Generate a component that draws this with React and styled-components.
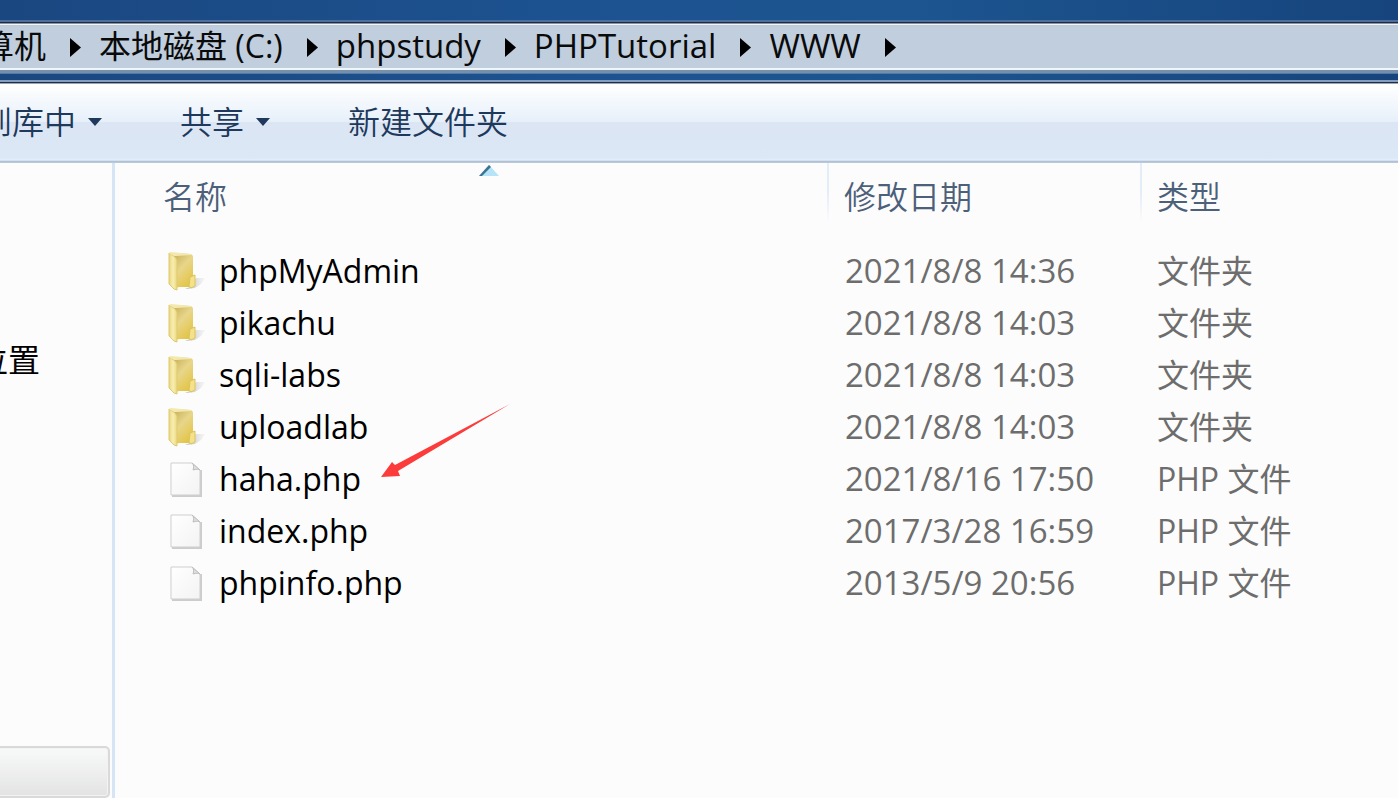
import React from 'react';
import styled, { createGlobalStyle } from 'styled-components';

const GlobalStyle = createGlobalStyle`
  * {
    box-sizing: border-box;
  }

  body {
    margin: 0;
    background: #fcfcfc;
    font-family: 'Open Sans', 'Noto Sans CJK SC', sans-serif;
    font-size: 32px;
    line-height: 44px;
  }
`;

const Window = styled.div`
  display: flex;
  flex-direction: column;
  height: 100vh;
  overflow: hidden;
`;

const Glass = styled.header`
  padding: 20px 0 6px;
  background: linear-gradient(90deg, #1b4780 0%, #1c5290 40%, #1c5590 65%, #17447c 100%);
`;

const AddressBar = styled.nav`
  height: 54px;
  border-top: 2px solid #4c6f9e;
  border-bottom: 1px solid #4f7ba6;
  background: linear-gradient(
    180deg,
    #1d2c46 0 1px,
    #8b929e 1px 2px,
    #f2f6fa 2px 3px,
    #bccadb 3px 4px,
    #c0cede 5px 46px,
    #f0f5fa 46px 48px,
    #7690ab 48px 51px
  );
`;

const Crumbs = styled.ol`
  display: flex;
  align-items: center;
  height: 48px;
  margin: 0 0 0 -18px;
  padding: 0;
  list-style: none;
`;

const Crumb = styled.li`
  display: flex;
  align-items: center;
  color: #0a0a0a;
  font-size: ${(props) => (props.$latin ? '33px' : '32px')};
  white-space: nowrap;
`;

const CrumbLink = styled.a`
  color: inherit;
  text-decoration: none;
`;

const CrumbArrow = styled.svg`
  width: 11px;
  height: 19px;
  margin: 2px 18px 0 24px;
`;

const Toolbar = styled.div`
  display: flex;
  align-items: center;
  gap: 78px;
  height: 83px;
  overflow: hidden;
  background: linear-gradient(
    180deg,
    #869dbe 0 2px,
    #1c2e4c 2px 3px,
    #98a5b6 3px 4px,
    #ffffff 4px,
    #e6f0fa 42px,
    #dbe5f4 42px,
    #dce8f6 78px,
    #e2effb 80px,
    #c3d2e3 81px,
    #9fb1c8 82px,
    #d5dfea 83px
  );
`;

const ToolButton = styled.button`
  display: flex;
  align-items: center;
  gap: 12px;
  padding: 0;
  border: 0;
  background: none;
  color: #1e395b;
  font: inherit;
  font-weight: 350;
  white-space: nowrap;

  &:first-child {
    margin-left: -20px;
  }
`;

const Caret = styled.svg`
  width: 14px;
  height: 8px;
`;

const Body = styled.main`
  display: flex;
  flex: 1;
  min-height: 0;
`;

const Sidebar = styled.aside`
  display: flex;
  flex: 0 0 115px;
  flex-direction: column;
  justify-content: space-between;
  padding-top: 175px;
  border-right: 3px solid #d6e5f5;
  overflow: hidden;
`;

const Place = styled.a`
  margin-left: -24px;
  color: #000;
  text-decoration: none;
  white-space: nowrap;
`;

const SelectedPlace = styled.div`
  height: 52px;
  margin: 0 2px 0 -8px;
  border: 2px solid #d9d9d9;
  border-radius: 5px;
  background: linear-gradient(180deg, #f8faf9, #e3e3e3);
  box-shadow: inset 0 0 0 1px #f3f3f3;
`;

const FileTable = styled.table`
  flex: 1;
  align-self: flex-start;
  width: 100%;
  border-collapse: collapse;
  table-layout: fixed;
`;

const HeadCell = styled.th`
  position: relative;
  width: ${(props) => props.$width || 'auto'};
  height: 82px;
  padding: 12px 0 0 ${(props) => props.$indent || '15px'};
  background: ${(props) =>
    props.$divided
      ? 'linear-gradient(180deg, #e3edf8 50%, #fcfcfc) right top / 2px 60px no-repeat'
      : 'none'};
  color: #4c607a;
  font-weight: 350;
  text-align: left;
  vertical-align: top;
`;

const SortMark = styled.svg`
  position: absolute;
  top: 2px;
  left: 364px;
  width: 20px;
  height: 11px;
`;

const Cell = styled.td`
  height: 52px;
  padding: 0 0 0 ${(props) => props.$indent || '15px'};
  color: #6d6d6d;
  font-size: ${(props) => (props.$latin ? '33px' : '32px')};
  white-space: nowrap;
`;

const NameCell = styled.td`
  height: 52px;
  padding: 0 0 0 50px;
  color: #000;
`;

const FileName = styled.div`
  position: relative;
  display: flex;
  align-items: center;
  gap: 12px;
`;

const Icon = styled.svg`
  flex: none;
  width: 42px;
  height: 42px;
`;

const Pointer = styled.svg`
  position: absolute;
  top: -54px;
  left: 215px;
  width: 132px;
  height: 76px;
`;

const crumbs = [
  { label: '算机' },
  { label: '本地磁盘 (C:)' },
  { label: 'phpstudy', latin: true },
  { label: 'PHPTutorial', latin: true },
  { label: 'WWW', latin: true },
];

const files = [
  { name: 'phpMyAdmin', date: '2021/8/8 14:36', folder: true },
  { name: 'pikachu', date: '2021/8/8 14:03', folder: true },
  { name: 'sqli-labs', date: '2021/8/8 14:03', folder: true },
  { name: 'uploadlab', date: '2021/8/8 14:03', folder: true },
  { name: 'haha.php', date: '2021/8/16 17:50', marked: true },
  { name: 'index.php', date: '2017/3/28 16:59' },
  { name: 'phpinfo.php', date: '2013/5/9 20:56' },
];

const FolderIcon = () => (
  <Icon viewBox="0 0 42 42" aria-hidden="true">
    <defs>
      <linearGradient id="folderBack" x1="0" y1="0" x2="0.6" y2="1">
        <stop offset="0" stopColor="#c4ac55" />
        <stop offset="0.5" stopColor="#e8d68a" />
        <stop offset="1" stopColor="#e3c548" />
      </linearGradient>
      <linearGradient id="folderFront" x1="0" y1="0" x2="1" y2="0">
        <stop offset="0" stopColor="#e8d67f" />
        <stop offset="0.5" stopColor="#f8eeb0" />
        <stop offset="1" stopColor="#ecd981" />
      </linearGradient>
      <linearGradient id="folderShade" x1="0" y1="0" x2="1" y2="0">
        <stop offset="0" stopColor="#8a8a8a" />
        <stop offset="1" stopColor="#dddddd" stopOpacity="0.3" />
      </linearGradient>
    </defs>
    <path d="M25 37 L31 28 L40 28 L36 34 L30 38 L20 39 Z" fill="url(#folderShade)" opacity="0.7" />
    <path d="M8 3 L26 4 L28 6 V35 L25 37 L14 37 L10 38 Z" fill="url(#folderBack)" />
    <path d="M25 27 L30 25 V36 L26 38 L24 36 Z" fill="#f3e28a" stroke="#dcc25a" strokeWidth="1" />
    <path d="M4 3 L10 7 L12 10 V40 L9 39 L4 34 Z" fill="url(#folderFront)" stroke="#dfca72" strokeWidth="1" />
    <path d="M4 3 L6 2 L26 4 L27 5 L11 6 L9 6 Z" fill="#f3e8ad" />
  </Icon>
);

const FileIcon = () => (
  <Icon viewBox="0 0 42 42" aria-hidden="true">
    <defs>
      <linearGradient id="paper" x1="0" y1="0" x2="1" y2="1">
        <stop offset="0" stopColor="#ffffff" />
        <stop offset="1" stopColor="#f3f3f3" />
      </linearGradient>
    </defs>
    <path d="M7 38 H36 V12" fill="none" stroke="#cccccc" strokeWidth="2" />
    <path d="M6 5 H27 L35 12 V37 H6 Z" fill="url(#paper)" stroke="#cfcfcf" strokeWidth="1" />
    <path d="M27 5 C29 7 29 9 28 12 C31 11 34 11 35 12 Z" fill="#dedede" stroke="#bebebe" strokeWidth="1" />
  </Icon>
);

const FileRow = ({ file }) => (
  <tr>
    <NameCell>
      <FileName>
        {file.folder ? <FolderIcon /> : <FileIcon />}
        {file.name}
        {file.marked && (
          <Pointer viewBox="0 0 132 76" aria-hidden="true">
            <path d="M1 74 L12 59 L15 62 L130 1 L18 68 L20 73 Z" fill="#fc3b3b" />
          </Pointer>
        )}
      </FileName>
    </NameCell>
    <Cell $latin $indent="16px">
      {file.date}
    </Cell>
    <Cell>{file.folder ? '文件夹' : 'PHP 文件'}</Cell>
  </tr>
);

const DownCaret = () => (
  <Caret viewBox="0 0 14 8" aria-hidden="true">
    <path d="M0 0 H14 L7 8 Z" fill="#1e395b" />
  </Caret>
);

const App = () => (
  <>
    <GlobalStyle />
    <Window>
      <Glass>
        <AddressBar>
          <Crumbs>
            {crumbs.map((crumb) => (
              <Crumb key={crumb.label} $latin={crumb.latin}>
                <CrumbLink href="#">{crumb.label}</CrumbLink>
                <CrumbArrow viewBox="0 0 11 19" aria-hidden="true">
                  <path d="M0 0 L11 9.5 L0 19 Z" fill="#000" />
                </CrumbArrow>
              </Crumb>
            ))}
          </Crumbs>
        </AddressBar>
      </Glass>
      <Toolbar>
        <ToolButton>
          到库中
          <DownCaret />
        </ToolButton>
        <ToolButton>
          共享
          <DownCaret />
        </ToolButton>
        <ToolButton>新建文件夹</ToolButton>
      </Toolbar>
      <Body>
        <Sidebar>
          <Place href="#">位置</Place>
          <SelectedPlace />
        </Sidebar>
        <FileTable>
          <thead>
            <tr>
              <HeadCell $width="714px" $indent="48px" $divided>
                名称
                <SortMark viewBox="0 0 20 11" aria-hidden="true">
                  <path d="M0 11 L10 0 L20 11 Z" fill="#b5e3f7" />
                  <path d="M0 11 L10 0 L12 2 L3 11 Z" fill="#3c7390" />
                </SortMark>
              </HeadCell>
              <HeadCell $width="313px" $divided>
                修改日期
              </HeadCell>
              <HeadCell>类型</HeadCell>
            </tr>
          </thead>
          <tbody>
            {files.map((file) => (
              <FileRow key={file.name} file={file} />
            ))}
          </tbody>
        </FileTable>
      </Body>
    </Window>
  </>
);

export default App;
